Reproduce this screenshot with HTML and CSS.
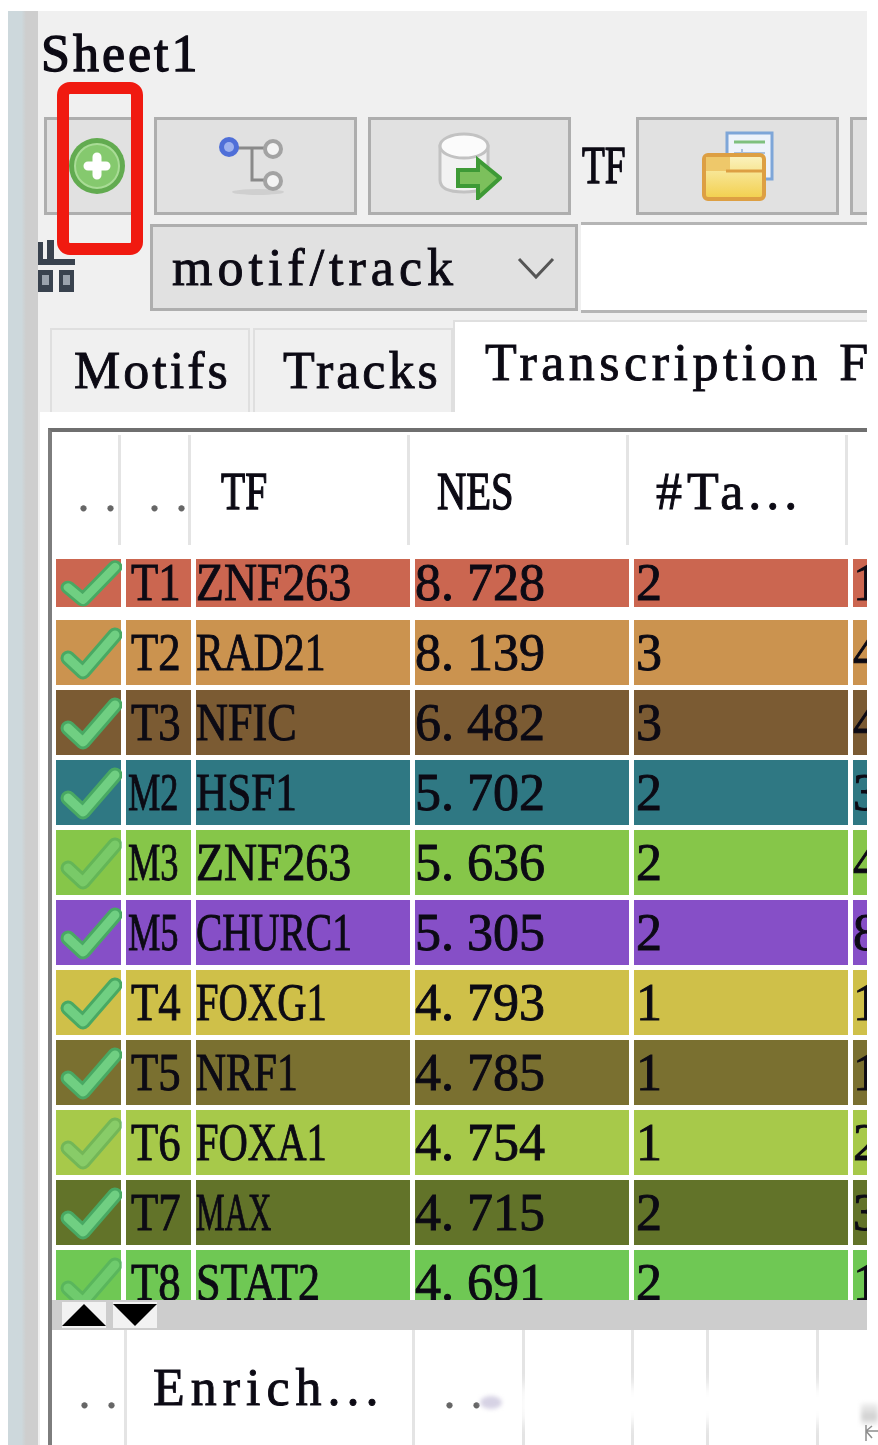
FILE: index.html
```html
<!DOCTYPE html>
<html lang="en">
<head>
<meta charset="utf-8">
<title>Sheet1</title>
<link rel="stylesheet" href="styles.css">
</head>
<body>
<svg class="sprite" width="0" height="0" aria-hidden="true">
  <symbol id="tick" viewBox="0 0 64 54" preserveAspectRatio="none">
    <path d="M10 32 L25 46 L57 9" fill="none" stroke="#49a963" stroke-width="15" stroke-linecap="round" stroke-linejoin="round"/>
    <path d="M10 32 L25 46 L57 9" fill="none" stroke="#70cf82" stroke-width="9" stroke-linecap="round" stroke-linejoin="round"/>
  </symbol>
</svg>
<div class="app">
  <div class="stripe"></div>
  <main class="main">
    <div class="title"><span class="txt heavy ls3">Sheet1</span></div>
    <div class="toolbar">
      <button class="tool tool-first">
        <svg class="ico-add" width="60" height="62" viewBox="0 0 60 62">
          <circle cx="30" cy="31" r="28" fill="#62ab50"/>
          <circle cx="30" cy="31" r="22" fill="#85c96e" stroke="#a9dc96" stroke-width="2"/>
          <path d="M30 22 V40 M21 31 H39" stroke="#fff" stroke-width="9" stroke-linecap="round"/>
        </svg>
      </button>
      <button class="tool">
        <svg class="ico-tree" width="70" height="60" viewBox="0 0 70 60">
          <ellipse cx="40" cy="56" rx="26" ry="3" fill="#cfcfcf"/>
          <path d="M14 12 H34 M34 12 V44 H52 M34 12 H52" fill="none" stroke="#8a8a8a" stroke-width="3"/>
          <circle cx="11" cy="11" r="10" fill="#4f6fd8"/><circle cx="11" cy="11" r="5" fill="#9db1ee"/>
          <circle cx="55" cy="13" r="8" fill="#f4f4f4" stroke="#a3a3a3" stroke-width="4"/>
          <circle cx="55" cy="45" r="8" fill="#f4f4f4" stroke="#a3a3a3" stroke-width="4"/>
        </svg>
      </button>
      <button class="tool">
        <svg width="64" height="68" viewBox="0 0 64 68">
          <path d="M2 14 V48 Q2 60 26 60 Q50 60 50 48 V14 Z" fill="#f2f2f2" stroke="#c2c2c2" stroke-width="3"/>
          <ellipse cx="26" cy="14" rx="24" ry="12" fill="#fbfbfb" stroke="#c2c2c2" stroke-width="3"/>
          <path d="M20 38 H40 V28 L62 46 L40 66 V54 H20 Z" fill="#7cc05c" stroke="#3e9a36" stroke-width="4"/>
        </svg>
      </button>
      <span class="txt heavy tool-label x72">TF</span>
      <button class="tool">
        <svg width="72" height="70" viewBox="0 0 72 70">
          <defs><linearGradient id="fold" x1="0" y1="0" x2="0" y2="1"><stop offset="0" stop-color="#fbf3c0"/><stop offset="1" stop-color="#f2cf4c"/></linearGradient></defs>
          <rect x="25" y="2" width="45" height="46" fill="#eef3fb" stroke="#7ea6d8" stroke-width="3"/>
          <path d="M32 11 H63" stroke="#7fc07f" stroke-width="3"/>
          <path d="M32 22 H63 M32 30 H63 M32 38 H63 M40 18 V42" stroke="#a9bfdc" stroke-width="2"/>
          <rect x="2" y="24" width="60" height="44" rx="4" fill="url(#fold)" stroke="#dd9f43" stroke-width="4"/>
          <rect x="4" y="26" width="24" height="14" fill="#eec86a"/>
          <path d="M24 40 H60" stroke="#dd9f43" stroke-width="3"/>
        </svg>
      </button>
      <button class="tool"></button>
    </div>
    <div class="filter">
      <svg class="grip" width="37" height="52" viewBox="0 0 37 52">
        <rect x="0" y="2" width="5" height="22" fill="#39424e"/>
        <rect x="9" y="0" width="7" height="24" fill="#39424e"/>
        <rect x="0" y="19" width="37" height="6" fill="#39424e"/>
        <rect x="0" y="30" width="15" height="22" fill="#39424e"/>
        <rect x="4" y="35" width="7" height="10" fill="#9aa2ac"/>
        <rect x="21" y="30" width="15" height="22" fill="#39424e"/>
        <rect x="25" y="35" width="7" height="10" fill="#9aa2ac"/>
      </svg>
      <div class="combo">
        <span class="txt ls5">motif/track</span>
        <svg class="chev" width="38" height="24" viewBox="0 0 38 24"><path d="M2 3 L19 21 L36 3" fill="none" stroke="#555" stroke-width="3"/></svg>
      </div>
      <div class="input"></div>
    </div>
    <div class="tabs">
      <div class="tab"><span class="txt ls3">Motifs</span></div>
      <div class="tab tab-b"><span class="txt ls3">Tracks</span></div>
      <div class="tab tab-active"><span class="txt ls45">Transcription Factors</span></div>
    </div>
    <div class="pane">
      <div class="frame">
        <div class="view">
          <div class="cols head">
            <div class="hcell dots"><span class="txt dim"><i class="gap">.</i>.</span></div>
            <div class="hcell dots dots2"><span class="txt dim"><i class="gap">.</i>.</span></div>
            <div class="hcell h-wide"><span class="txt heavy x76">TF</span></div>
            <div class="hcell h-num"><span class="txt heavy x78">NES</span></div>
            <div class="hcell h-num"><span class="txt ls5">#Ta...</span></div>
            <div class="hcell"></div>
          </div>
          <div class="cols row row-short c1"><div class="cell"><svg class="tick"><use href="#tick"/></svg></div><div class="cell pad"><span class="txt x86">T1</span></div><div class="cell"><span class="txt x88">ZNF263</span></div><div class="cell"><span class="txt">8<i class="pt">.</i>728</span></div><div class="cell pad-n"><span class="txt">2</span></div><div class="cell"><span class="txt">1</span></div></div>
          <div class="cols row c2"><div class="cell"><svg class="tick"><use href="#tick"/></svg></div><div class="cell pad"><span class="txt x86">T2</span></div><div class="cell"><span class="txt x80">RAD21</span></div><div class="cell"><span class="txt">8<i class="pt">.</i>139</span></div><div class="cell pad-n"><span class="txt">3</span></div><div class="cell"><span class="txt">4</span></div></div>
          <div class="cols row c3"><div class="cell"><svg class="tick"><use href="#tick"/></svg></div><div class="cell pad"><span class="txt x86">T3</span></div><div class="cell"><span class="txt x85">NFIC</span></div><div class="cell"><span class="txt">6<i class="pt">.</i>482</span></div><div class="cell pad-n"><span class="txt">3</span></div><div class="cell"><span class="txt">4</span></div></div>
          <div class="cols row c4"><div class="cell"><svg class="tick"><use href="#tick"/></svg></div><div class="cell pad-n"><span class="txt x70">M2</span></div><div class="cell"><span class="txt x83">HSF1</span></div><div class="cell"><span class="txt">5<i class="pt">.</i>702</span></div><div class="cell pad-n"><span class="txt">2</span></div><div class="cell"><span class="txt">3</span></div></div>
          <div class="cols row c5"><div class="cell"><svg class="tick tick-pale"><use href="#tick"/></svg></div><div class="cell pad-n"><span class="txt x70">M3</span></div><div class="cell"><span class="txt x88">ZNF263</span></div><div class="cell"><span class="txt">5<i class="pt">.</i>636</span></div><div class="cell pad-n"><span class="txt">2</span></div><div class="cell"><span class="txt">4</span></div></div>
          <div class="cols row c6"><div class="cell"><svg class="tick"><use href="#tick"/></svg></div><div class="cell pad-n"><span class="txt x70">M5</span></div><div class="cell"><span class="txt x76">CHURC1</span></div><div class="cell"><span class="txt">5<i class="pt">.</i>305</span></div><div class="cell pad-n"><span class="txt">2</span></div><div class="cell"><span class="txt">8</span></div></div>
          <div class="cols row c7"><div class="cell"><svg class="tick"><use href="#tick"/></svg></div><div class="cell pad"><span class="txt x86">T4</span></div><div class="cell"><span class="txt x78">FOXG1</span></div><div class="cell"><span class="txt">4<i class="pt">.</i>793</span></div><div class="cell pad-n"><span class="txt">1</span></div><div class="cell"><span class="txt">1</span></div></div>
          <div class="cols row c8"><div class="cell"><svg class="tick"><use href="#tick"/></svg></div><div class="cell pad"><span class="txt x86">T5</span></div><div class="cell"><span class="txt x80">NRF1</span></div><div class="cell"><span class="txt">4<i class="pt">.</i>785</span></div><div class="cell pad-n"><span class="txt">1</span></div><div class="cell"><span class="txt">1</span></div></div>
          <div class="cols row c9"><div class="cell"><svg class="tick tick-pale"><use href="#tick"/></svg></div><div class="cell pad"><span class="txt x86">T6</span></div><div class="cell"><span class="txt x78">FOXA1</span></div><div class="cell"><span class="txt">4<i class="pt">.</i>754</span></div><div class="cell pad-n"><span class="txt">1</span></div><div class="cell"><span class="txt">2</span></div></div>
          <div class="cols row c10"><div class="cell"><svg class="tick"><use href="#tick"/></svg></div><div class="cell pad"><span class="txt x86">T7</span></div><div class="cell"><span class="txt x62">MAX</span></div><div class="cell"><span class="txt">4<i class="pt">.</i>715</span></div><div class="cell pad-n"><span class="txt">2</span></div><div class="cell"><span class="txt">3</span></div></div>
          <div class="cols row c11"><div class="cell"><svg class="tick tick-pale"><use href="#tick"/></svg></div><div class="cell pad"><span class="txt x86">T8</span></div><div class="cell"><span class="txt x85">STAT2</span></div><div class="cell"><span class="txt">4<i class="pt">.</i>691</span></div><div class="cell pad-n"><span class="txt">2</span></div><div class="cell"><span class="txt">1</span></div></div>
        </div>
        <div class="splitter">
          <span class="arrow-box"><svg width="44" height="22" viewBox="0 0 44 22"><path d="M22 0 L44 22 H0 Z" fill="#000"/></svg></span>
          <span class="arrow-box"><svg width="44" height="22" viewBox="0 0 44 22"><path d="M0 0 H44 L22 22 Z" fill="#000"/></svg></span>
        </div>
        <div class="lower">
          <div class="lcell lc1"><span class="txt dim"><i class="gap">.</i>.</span></div>
          <div class="lcell lc2"><span class="txt ls6">Enrich...</span></div>
          <div class="lcell lc3"><span class="txt dim"><i class="gap">.</i>.</span></div>
          <div class="lcell lc4"></div>
          <div class="lcell lc5"></div>
          <div class="lcell lc6"></div>
          <div class="lcell lc7"></div>
        </div>
        <div class="smudge"></div>
        <div class="dot-smudge"></div>
      </div>
    </div>
    <div class="red-mark"></div>
  </main>
</div>
<div class="corner-shade"></div>
<svg class="corner-cursor" width="14" height="16" viewBox="0 0 14 16"><path d="M1 0 V16 M1 6 H14 M1 6 L7 1 M1 6 L7 13" fill="none" stroke="#8d8d8d" stroke-width="1.5"/></svg>
</body>
</html>
```
FILE: styles.css
```css
* { box-sizing: border-box; }
html, body { margin: 0; padding: 0; background: #fff; }
body { width: 878px; height: 1445px; overflow: hidden; padding: 11px 11px 0 8px; }
.sprite { position: absolute; }
.app { display: flex; height: 1434px; filter: blur(0.7px); }
.stripe { width: 30px; background: linear-gradient(90deg, #cdd8dc 0 45%, #cecece 60%); }
.main { position: relative; flex: 1; min-width: 0; display: flex; flex-direction: column; background: #f0f0f0; overflow: hidden; }

.txt {
  display: inline-block;
  font-family: "Liberation Serif", "Times New Roman", serif;
  font-size: 52px;
  line-height: 1;
  color: #0c0a14;
  white-space: pre;
  transform-origin: left center;
  -webkit-text-stroke: 0.9px #0c0a14;
}
.heavy { -webkit-text-stroke: 1.3px #0c0a14; }
.dim { color: #666; -webkit-text-stroke: 0; }
.pt { font-style: normal; letter-spacing: 13px; }
.gap { font-style: normal; letter-spacing: 14px; }
.ls3 { letter-spacing: 3px; }
.ls45 { letter-spacing: 4.5px; }
.ls5 { letter-spacing: 5px; }
.ls6 { letter-spacing: 6px; }
.x62 { transform: scaleX(.62); }
.x70 { transform: scaleX(.7); }
.x72 { transform: scaleX(.72); }
.x76 { transform: scaleX(.76); }
.x78 { transform: scaleX(.78); }
.x80 { transform: scaleX(.8); }
.x83 { transform: scaleX(.83); }
.x85 { transform: scaleX(.85); }
.x86 { transform: scaleX(.86); }
.x88 { transform: scaleX(.88); }

.title { height: 70px; padding: 17px 0 0 3px; }

.toolbar { display: flex; align-items: center; gap: 11px; height: 98px; margin-top: 36px; padding-left: 6px; }
.tool { flex: none; width: 203px; height: 98px; padding: 0; display: flex; align-items: center; justify-content: center; background: #e1e1e1; border: 3px solid #aeaeae; }
.tool-first { width: 99px; }
.tool-label { flex: none; width: 43px; }
.ico-add { margin-left: 6px; }
.ico-tree { margin-right: 6px; }

.filter { display: flex; align-items: flex-start; height: 91px; margin-top: 7px; }
.grip { flex: none; margin-top: 18px; }
.combo { flex: none; margin-top: 2px; margin-left: 75px; width: 428px; height: 87px; padding: 0 20px 0 19px; display: flex; align-items: center; justify-content: space-between; background: #e1e1e1; border: 3px solid #aeaeae; }
.chev { flex: none; }
.input { flex: 1; height: 91px; margin-left: 3px; background: #fff; border-top: 3px solid #b5b5b5; border-bottom: 3px solid #b5b5b5; }

.tabs { display: flex; align-items: flex-end; height: 99px; padding-left: 12px; }
.tab { flex: none; width: 200px; height: 84px; margin-right: 3px; display: flex; align-items: center; padding-left: 22px; background: #f0f0f0; border: 2px solid #dfdfdf; border-bottom: 0; }
.tab-b { padding-left: 28px; }
.tab-active { flex: 1; min-width: 0; margin-left: -3px; margin-right: 0; height: 92px; padding: 0 0 8px 30px; background: #fff; border-right: 0; overflow: hidden; }

.pane { flex: 1; min-height: 0; margin-left: 2px; padding: 16px 0 0 8px; background: #fff; }
.frame { position: relative; height: 100%; display: flex; flex-direction: column; border-left: 4px solid #7d7d7d; border-top: 4px solid #6f6f6f; overflow: hidden; }
.view { flex: 1; min-height: 0; overflow: hidden; padding-left: 4px; background: #fff; }
.cols { display: grid; grid-template-columns: 65px 65px 214px 214px 214px 60px; column-gap: 5px; }
.head { height: 113px; padding-top: 3px; margin-bottom: 14px; }
.hcell { height: 110px; display: flex; align-items: center; border-right: 3px solid #e4e4e4; }
.dots { padding: 8px 0 0 21px; }
.dots2 { padding-left: 22px; }
.h-wide { padding: 4px 0 0 25px; }
.h-num { padding: 4px 0 0 22px; }
.hcell:last-child { border-right: 0; }

.row { height: 65px; margin-bottom: 5px; grid-template-rows: 65px; }
.row-short { height: 48px; margin-bottom: 13px; grid-template-rows: 48px; }
.row-short .tick { height: 48px; }
.cell { display: flex; align-items: center; min-width: 0; }
.pad { padding-left: 5px; }
.pad-n { padding-left: 2px; }
.tick { width: 64px; height: 54px; flex: none; margin: 0 0 0 2px; }
.tick-pale { opacity: .55; }
.c1 .cell { background: #cb6650; }
.c2 .cell { background: #cb934f; }
.c3 .cell { background: #7b5b33; }
.c4 .cell { background: #2f7883; }
.c5 .cell { background: #86c649; }
.c6 .cell { background: #864fc7; }
.c7 .cell { background: #cfc049; }
.c8 .cell { background: #7a7030; }
.c9 .cell { background: #a7c94a; }
.c10 .cell { background: #627329; }
.c11 .cell { background: #6fc854; }

.splitter { flex: none; height: 30px; display: flex; align-items: center; gap: 7px; padding-left: 10px; background: #cdcdcd; }
.arrow-box { display: flex; width: 44px; height: 26px; background: #f2f2f2; }
.arrow-box svg { margin-top: 2px; }

.lower { flex: none; height: 115px; display: flex; background: #fff; }
.lcell { flex: none; height: 100%; display: flex; align-items: center; border-right: 3px solid #e4e4e4; }
.lc1 { width: 75px; padding: 6px 0 0 26px; }
.lc2 { width: 288px; padding: 0 0 0 26px; }
.lc3 { width: 110px; padding: 6px 0 0 28px; }
.lc4 { width: 109px; }
.lc5 { width: 75px; }
.lc6 { width: 110px; }
.lc7 { width: 60px; border-right: 0; }

.smudge { position: absolute; left: 465px; bottom: 22px; width: 340px; height: 38px; background: #fff; filter: blur(7px); }
.dot-smudge { position: absolute; left: 428px; bottom: 36px; width: 22px; height: 13px; border-radius: 50%; background: #d6d2e4; filter: blur(2px); }

.red-mark { position: absolute; left: 19px; top: 71px; width: 86px; height: 173px; border: 12px solid #f01a10; border-radius: 13px; }

.corner-shade { position: absolute; left: 861px; top: 1403px; width: 17px; height: 24px; background: linear-gradient(180deg, #f2f2f2, #cfcfcf 60%, #fff); filter: blur(2px); }
.corner-cursor { position: absolute; left: 865px; top: 1425px; }
```
